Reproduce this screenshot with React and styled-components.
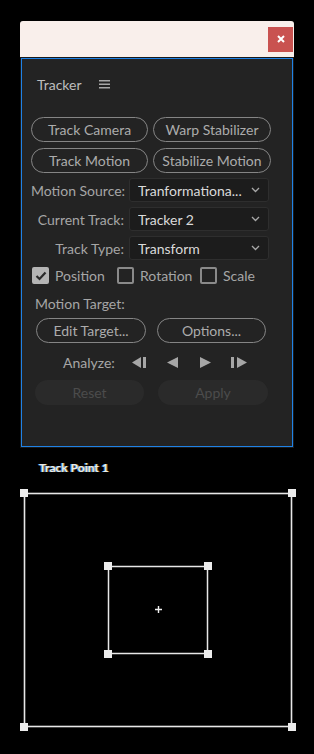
import React from 'react';
import styled, { createGlobalStyle } from 'styled-components';

const GlobalStyle = createGlobalStyle`
  html, body {
    margin: 0;
    padding: 0;
    background: #000;
  }
  body {
    font-family: Lato, "Noto Sans", sans-serif;
  }
`;

const Page = styled.div`
  width: 314px;
  height: 754px;
  overflow: hidden;
  background: #000;
`;

const Window = styled.div`
  width: 274px;
  margin: 21px 0 0 20px;
  background: #1a1a1a;
  border-radius: 3px 3px 0 0;
  padding: 0 1px 1px 1px;
  box-sizing: border-box;
`;

const TitleBar = styled.div`
  height: 36px;
  margin: 0 -1px;
  background: #f9efeb;
  border-radius: 3px 3px 0 0;
  display: flex;
  justify-content: flex-end;
  align-items: center;
  padding-right: 1px;
  margin-bottom: 1px;
`;

const CloseButton = styled.div`
  width: 25px;
  height: 25px;
  background: #c95250;
  display: flex;
  align-items: center;
  justify-content: center;
`;

const Panel = styled.div`
  height: 389px;
  box-sizing: border-box;
  border: 1px solid #1f82e6;
  background: #232323;
  padding: 13px 0 0 9px;
`;

const Header = styled.div`
  height: 24px;
  display: flex;
  align-items: center;
  gap: 17px;
  padding-left: 6px;
  color: #bdbdbd;
  font-size: 14px;
`;

const ButtonGrid = styled.div`
  width: 240px;
  display: grid;
  grid-template-columns: 117px 118px;
  column-gap: 5px;
  row-gap: 6px;
  margin-top: ${p => p.$top || 0}px;
  padding-left: ${p => p.$left || 0}px;
`;

const PillButton = styled.div`
  height: 25px;
  box-sizing: border-box;
  border: 1.5px solid #858585;
  border-radius: 13px;
  display: flex;
  align-items: center;
  justify-content: center;
  color: #acacac;
  font-size: 14px;
  white-space: nowrap;
`;

const FadedButton = styled.div`
  width: ${p => p.$w}px;
  height: 25px;
  border-radius: 13px;
  background: #2a2a2a;
  color: #4c4c4c;
  font-size: 14px;
  display: flex;
  align-items: center;
  justify-content: center;
`;

const PairRow = styled.div`
  display: flex;
  gap: ${p => p.$gap}px;
  margin-top: ${p => p.$top}px;
  padding-left: ${p => p.$left}px;
`;

const FieldRow = styled.div`
  display: flex;
  align-items: center;
  gap: 5px;
  margin-top: 5px;
`;

const FieldLabel = styled.div`
  width: 93px;
  text-align: right;
  color: #a6a6a6;
  font-size: 14px;
  white-space: nowrap;
`;

const Select = styled.div`
  width: 140px;
  height: 24px;
  box-sizing: border-box;
  background: #1c1c1c;
  border: 1px solid #2e2e2e;
  border-radius: 3px;
  display: flex;
  align-items: center;
  padding: 0 8px 0 8px;
  color: #dadada;
  font-size: 14px;
  gap: 6px;
`;

const SelectText = styled.span`
  flex: 1;
  white-space: nowrap;
  overflow: hidden;
  text-overflow: ellipsis;
`;

const CheckRow = styled.div`
  display: flex;
  align-items: center;
  margin-top: 7px;
  padding-left: 1px;
  height: 17px;
`;

const CheckItem = styled.div`
  display: flex;
  align-items: center;
  gap: 6px;
  width: ${p => p.$w}px;
  color: #a6a6a6;
  font-size: 14px;
`;

const Box = styled.div`
  width: 17px;
  height: 17px;
  box-sizing: border-box;
  border: 2px solid #8a8a8a;
  border-radius: 2px;
  background: ${p => (p.$checked ? '#b4b4b4' : 'transparent')};
  border-color: ${p => (p.$checked ? '#b4b4b4' : '#8a8a8a')};
  display: flex;
  align-items: center;
  justify-content: center;
`;

const SectionLabel = styled.div`
  margin-top: 11px;
  padding-left: 4px;
  color: #a6a6a6;
  font-size: 14px;
  height: 18px;
  line-height: 18px;
`;

const AnalyzeRow = styled.div`
  display: flex;
  align-items: center;
  margin-top: 12px;
  padding-left: 32px;
  height: 14px;
  color: #a6a6a6;
  font-size: 14px;
`;

const AnalyzeLabel = styled.span`
  width: 69px;
`;

const Transport = styled.div`
  display: flex;
  align-items: center;
  gap: ${p => p.$gap}px;
`;

const TrackLabel = styled.div`
  margin: 13px 0 0 39px;
  font-size: 12px;
  font-weight: 700;
  color: #eaeaea;
  height: 14px;
  line-height: 14px;
  text-shadow: -1px 0 rgba(80, 170, 255, 0.8), 1px 0 rgba(220, 180, 70, 0.6);
`;

const TrackCanvas = styled.svg`
  display: block;
  margin-top: 6px;
`;

const Chevron = () => (
  <svg width="9" height="6" viewBox="0 0 9 6">
    <path d="M1 1 L4.5 4.5 L8 1" fill="none" stroke="#a8a8a8" strokeWidth="1.3" />
  </svg>
);

const Check = () => (
  <svg width="12" height="10" viewBox="0 0 12 10">
    <path d="M1.5 5 L4.5 8 L10.5 1.5" fill="none" stroke="#2a2a2a" strokeWidth="2.2" />
  </svg>
);

const StepBack = () => (
  <svg width="15" height="11" viewBox="0 0 15 11">
    <path d="M0 5.5 L9 0 L9 11 Z" fill="#a6a6a6" />
    <rect x="11" y="0" width="3" height="11" fill="#a6a6a6" />
  </svg>
);

const PlayBack = () => (
  <svg width="12" height="11" viewBox="0 0 12 11">
    <path d="M0 5.5 L11 0 L11 11 Z" fill="#a6a6a6" />
  </svg>
);

const PlayForward = () => (
  <svg width="12" height="11" viewBox="0 0 12 11">
    <path d="M12 5.5 L1 0 L1 11 Z" fill="#a6a6a6" />
  </svg>
);

const StepForward = () => (
  <svg width="16" height="11" viewBox="0 0 16 11">
    <rect x="0" y="0" width="3" height="11" fill="#a6a6a6" />
    <path d="M16 5.5 L6 0 L6 11 Z" fill="#a6a6a6" />
  </svg>
);

const Handle = ({ x, y }) => <rect x={x} y={y} width="8" height="8" fill="#ececec" />;

function App() {
  return (
    <Page>
      <GlobalStyle />
      <Window>
        <TitleBar>
          <CloseButton>
            <svg width="8" height="8" viewBox="0 0 8 8">
              <path d="M1 1 L7 7 M7 1 L1 7" stroke="#fff" strokeWidth="2" />
            </svg>
          </CloseButton>
        </TitleBar>
        <Panel>
          <Header>
            <span>Tracker</span>
            <svg width="11" height="10" viewBox="0 0 11 10">
              <rect x="0" y="1" width="11" height="1.5" fill="#a8a8a8" />
              <rect x="0" y="4.5" width="11" height="1.5" fill="#a8a8a8" />
              <rect x="0" y="8" width="11" height="1.5" fill="#a8a8a8" />
            </svg>
          </Header>

          <ButtonGrid $top={21}>
            <PillButton>Track Camera</PillButton>
            <PillButton>Warp Stabilizer</PillButton>
            <PillButton>Track Motion</PillButton>
            <PillButton>Stabilize Motion</PillButton>
          </ButtonGrid>

          <FieldRow>
            <FieldLabel>Motion Source:</FieldLabel>
            <Select>
              <SelectText>Tranformationa...</SelectText>
              <Chevron />
            </Select>
          </FieldRow>
          <FieldRow>
            <FieldLabel>Current Track:</FieldLabel>
            <Select>
              <SelectText>Tracker 2</SelectText>
              <Chevron />
            </Select>
          </FieldRow>
          <FieldRow>
            <FieldLabel>Track Type:</FieldLabel>
            <Select>
              <SelectText>Transform</SelectText>
              <Chevron />
            </Select>
          </FieldRow>

          <CheckRow>
            <CheckItem $w={85}>
              <Box $checked><Check /></Box>
              Position
            </CheckItem>
            <CheckItem $w={83}>
              <Box />
              Rotation
            </CheckItem>
            <CheckItem $w={60}>
              <Box />
              Scale
            </CheckItem>
          </CheckRow>

          <SectionLabel>Motion Target:</SectionLabel>

          <PairRow $gap={11} $top={5} $left={5}>
            <PillButton style={{ width: 110 }}>Edit Target...</PillButton>
            <PillButton style={{ width: 109 }}>Options...</PillButton>
          </PairRow>

          <AnalyzeRow>
            <AnalyzeLabel>Analyze:</AnalyzeLabel>
            <Transport $gap={20}>
              <StepBack />
              <PlayBack />
              <PlayForward />
              <StepForward />
            </Transport>
          </AnalyzeRow>

          <PairRow $gap={14} $top={11} $left={4}>
            <FadedButton $w={109}>Reset</FadedButton>
            <FadedButton $w={110}>Apply</FadedButton>
          </PairRow>
        </Panel>
      </Window>

      <TrackLabel>Track Point 1</TrackLabel>

      <TrackCanvas width="314" height="270" viewBox="0 0 314 270">
        <rect x="24.5" y="12.5" width="267" height="233" fill="none" stroke="#e8e8e8" strokeWidth="1.6" />
        <Handle x={20} y={8} />
        <Handle x={288} y={8} />
        <Handle x={20} y={242} />
        <Handle x={288} y={242} />

        <rect x="108.5" y="85.5" width="99" height="87" fill="none" stroke="#e8e8e8" strokeWidth="1.5" />
        <Handle x={104} y={81} />
        <Handle x={204} y={81} />
        <Handle x={104} y={169} />
        <Handle x={204} y={169} />

        <path d="M155 128.5 H162 M158.5 125 V132" stroke="#f0f0f0" strokeWidth="1.4" />
      </TrackCanvas>
    </Page>
  );
}

export default App;
